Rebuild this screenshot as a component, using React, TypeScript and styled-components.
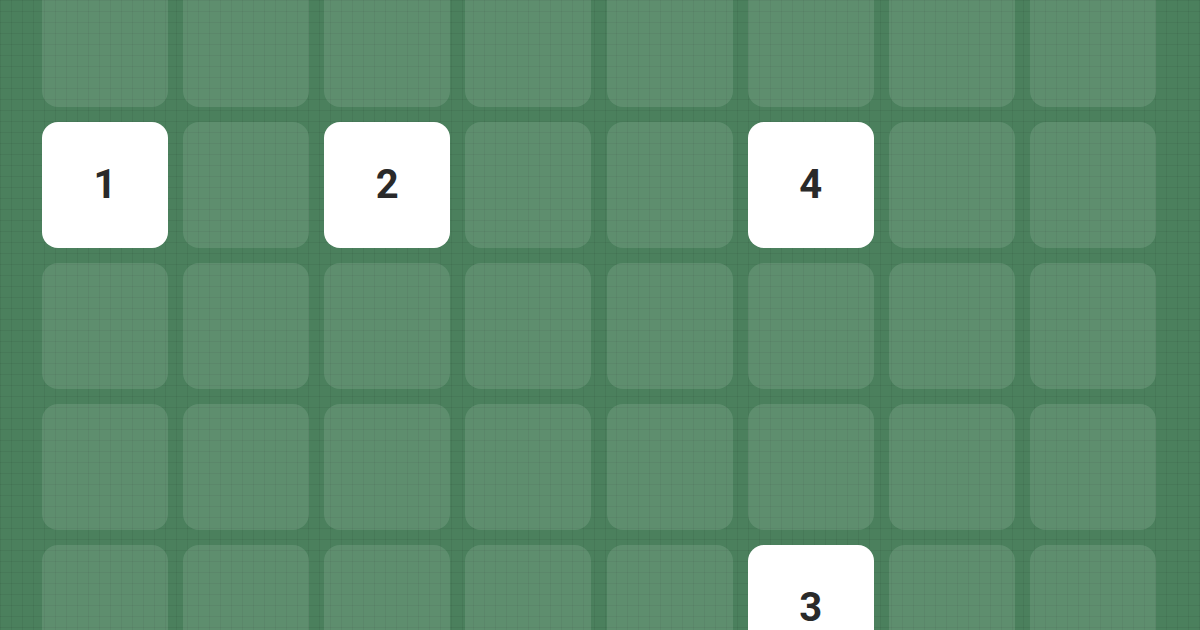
import * as React from "react";
import styled, { createGlobalStyle } from "styled-components";

const GlobalStyle = createGlobalStyle`
  html, body {
    margin: 0;
    padding: 0;
    overflow: hidden;
  }
  body {
    font-family: Roboto, "Liberation Sans", sans-serif;
  }
`;

const Page = styled.div`
  width: 1200px;
  height: 630px;
  overflow: hidden;
  background-color: #4b805d;
  background-image:
    linear-gradient(rgba(0, 0, 0, 0.055) 1px, transparent 1px),
    linear-gradient(90deg, rgba(0, 0, 0, 0.055) 1px, transparent 1px);
  background-size: 11px 11px;
  display: flex;
  justify-content: center;
`;

const Board = styled.div`
  margin-top: -19px;
  margin-left: -2px;
  display: grid;
  grid-template-columns: repeat(8, 126px);
  grid-auto-rows: 126px;
  column-gap: 15.14px;
  row-gap: 15px;
  align-content: start;
`;

const Cell = styled.div<{ $filled?: boolean }>`
  border-radius: 16px;
  background: ${(p) => (p.$filled ? "#ffffff" : "rgba(255, 255, 255, 0.11)")};
  display: flex;
  align-items: center;
  justify-content: center;
  color: #2a2a2a;
  font-weight: 700;
  font-size: 40px;
  line-height: 1;
`;

// row-col -> label
const tiles: Record<string, string> = {
  "1-0": "1",
  "1-2": "2",
  "1-5": "4",
  "4-5": "3",
};

export default function App() {
  const cells = [];
  for (let r = 0; r < 5; r++) {
    for (let c = 0; c < 8; c++) {
      const label = tiles[`${r}-${c}`];
      cells.push(
        <Cell key={`${r}-${c}`} $filled={!!label}>
          {label}
        </Cell>
      );
    }
  }
  return (
    <>
      <GlobalStyle />
      <Page>
        <Board>{cells}</Board>
      </Page>
    </>
  );
}
